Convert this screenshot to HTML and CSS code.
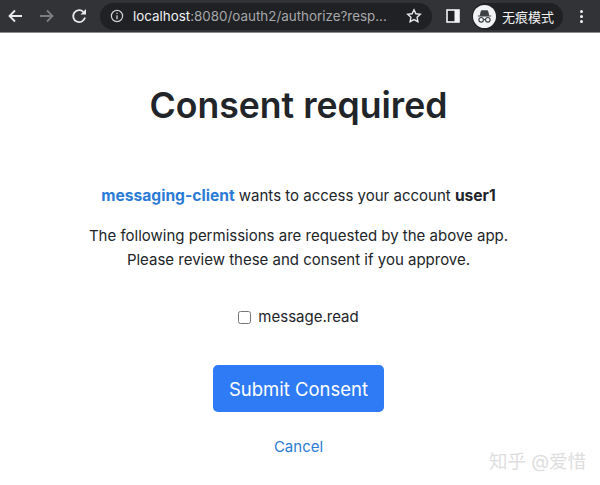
FILE: index.html
```html
<!DOCTYPE html>
<html lang="en">
<head>
    <meta charset="UTF-8">
    <meta name="viewport" content="width=device-width, initial-scale=1.0">
    <title>Consent required</title>
    <link rel="stylesheet" href="styles.css">
</head>
<body>
    <div class="toolbar">
        <svg class="nav-icon" viewBox="0 0 16 16"><path d="M15 8H2.500M8 2.500L2.500 8 8 13.500" fill="none" stroke="#e8eaed" stroke-width="1.800"/></svg>
        <svg class="nav-icon forward" viewBox="0 0 16 16"><path d="M1 8h12.500M8 2.500L13.500 8 8 13.500" fill="none" stroke="#7b7d80" stroke-width="1.800"/></svg>
        <svg class="nav-icon reload" viewBox="0 0 16 16"><path d="M14 9.500A6 6 0 1 1 12.400 3.800" fill="none" stroke="#e8eaed" stroke-width="1.800"/><path d="M9.500 6.500H15V1z" fill="#e8eaed"/></svg>
        <div class="omnibox">
            <svg class="info-icon" viewBox="0 0 14 14"><circle cx="7" cy="7" r="5.600" fill="none" stroke="#d0d2d5" stroke-width="1.200"/><path d="M7 6.200v4M7 3.700v1.300" stroke="#d0d2d5" stroke-width="1.300"/></svg>
            <span class="url"><span class="host">localhost</span>:8080/oauth2/authorize?resp...</span>
            <svg class="star-icon" viewBox="0 0 16 16"><path d="M8 1.800l1.900 4 4.400.5-3.200 3 .8 4.400L8 11.600l-3.900 2.100.8-4.400-3.200-3 4.400-.5z" fill="none" stroke="#e8eaed" stroke-width="1.400"/></svg>
        </div>
        <svg class="panel-icon" viewBox="0 0 14 14"><rect x="1" y="1" width="12" height="12" fill="#202124" stroke="#f1f3f4" stroke-width="1.600"/><rect x="8.500" y="1" width="4.500" height="12" fill="#f1f3f4"/></svg>
        <div class="incognito">
            <span class="incognito-badge">
                <svg viewBox="0 0 20 20"><path d="M3 9.500h14M5.500 9l1.200-5h6.600l1.200 5z" fill="#3c4043" stroke="#3c4043" stroke-width="1"/><circle cx="6.500" cy="13.500" r="2.400" fill="none" stroke="#3c4043" stroke-width="1.200"/><circle cx="13.500" cy="13.500" r="2.400" fill="none" stroke="#3c4043" stroke-width="1.200"/><path d="M8.900 13.200h2.200" stroke="#3c4043" stroke-width="1.200"/></svg>
            </span>
            <span class="incognito-label">无痕模式</span>
        </div>
        <div class="menu-dots"><i></i><i></i><i></i></div>
    </div>

    <main class="consent">
        <h1>Consent required</h1>
        <p class="who"><a href="#" class="client">messaging-client</a> wants to access your account <b>user1</b></p>
        <p class="explain">The following permissions are requested by the above app.<br>Please review these and consent if you approve.</p>
        <label class="scope"><input type="checkbox"> message.read</label>
        <button class="submit">Submit Consent</button>
        <a href="#" class="cancel">Cancel</a>
    </main>

    <div class="watermark">知乎 @爱惜</div>
</body>
</html>
```

FILE: styles.css
```css
body {
    margin: 0;
    height: 485px;
    overflow: hidden;
    background-color: #fff;
    font-family: Inter, "Liberation Sans", "Noto Sans CJK SC", sans-serif;
    color: #212529;
    position: relative;
}
.toolbar {
    height: 32px;
    background-color: #323337;
    border-bottom: 1px solid #8a8b8d;
    display: flex;
    align-items: center;
    padding-left: 7px;
}
.nav-icon {
    width: 16px;
    height: 16px;
    margin-right: 16px;
}
.nav-icon.reload {
    margin-right: 13px;
}
.omnibox {
    width: 332px;
    height: 27px;
    border-radius: 14px;
    background-color: #202124;
    display: flex;
    align-items: center;
    padding-left: 10px;
    box-sizing: border-box;
}
.info-icon {
    width: 14px;
    height: 14px;
    margin-right: 9px;
}
.url {
    font-size: 13.4px;
    color: #a6a8ab;
    white-space: nowrap;
    flex: 1;
}
.host {
    color: #f1f3f4;
}
.star-icon {
    width: 16px;
    height: 16px;
    margin-right: 10px;
}
.panel-icon {
    width: 14px;
    height: 14px;
    margin-left: 14px;
}
.incognito {
    display: flex;
    align-items: center;
    height: 27px;
    width: 91px;
    margin-left: 12px;
    border-radius: 14px;
    background-color: #202124;
}
.incognito-badge {
    width: 23px;
    height: 23px;
    margin-left: 1px;
    border-radius: 50%;
    background-color: #f1f3f4;
    display: flex;
    align-items: center;
    justify-content: center;
}
.incognito-badge svg {
    width: 19px;
    height: 19px;
}
.incognito-label {
    font-size: 13px;
    color: #f1f3f4;
    margin-left: 6px;
    white-space: nowrap;
}
.menu-dots {
    margin-left: 17px;
    display: flex;
    flex-direction: column;
    gap: 2px;
}
.menu-dots i {
    width: 3px;
    height: 3px;
    border-radius: 50%;
    background-color: #f1f3f4;
}
.consent {
    display: flex;
    flex-direction: column;
    align-items: center;
    text-align: center;
    width: 597px;
}
h1 {
    margin: 51px 0 0;
    font-size: 35.6px;
    font-weight: 600;
    line-height: 44px;
}
.who {
    margin: 56px 0 0;
    font-size: 15px;
    line-height: 24px;
}
.client {
    color: #2a7bd6;
    font-size: 15.6px;
    font-weight: 700;
    text-decoration: none;
}
.who b {
    font-size: 15.6px;
}
.explain {
    margin: 16px 0 0;
    font-size: 15px;
    line-height: 24px;
}
.scope {
    margin-top: 33px;
    font-size: 15px;
    line-height: 24px;
    display: flex;
    align-items: center;
    gap: 7px;
}
.scope input {
    margin: 0;
    width: 13px;
    height: 13px;
}
.submit {
    margin-top: 36px;
    width: 171px;
    height: 47px;
    border: none;
    border-radius: 5px;
    background-color: #2f7bf6;
    color: #fff;
    font-family: inherit;
    font-size: 18.5px;
}
.cancel {
    margin-top: 23px;
    color: #2a7bd6;
    font-size: 15px;
    line-height: 24px;
    text-decoration: none;
}
.watermark {
    position: absolute;
    right: 14px;
    top: 447px;
    font-size: 18.5px;
    color: #dedede;
}
```
